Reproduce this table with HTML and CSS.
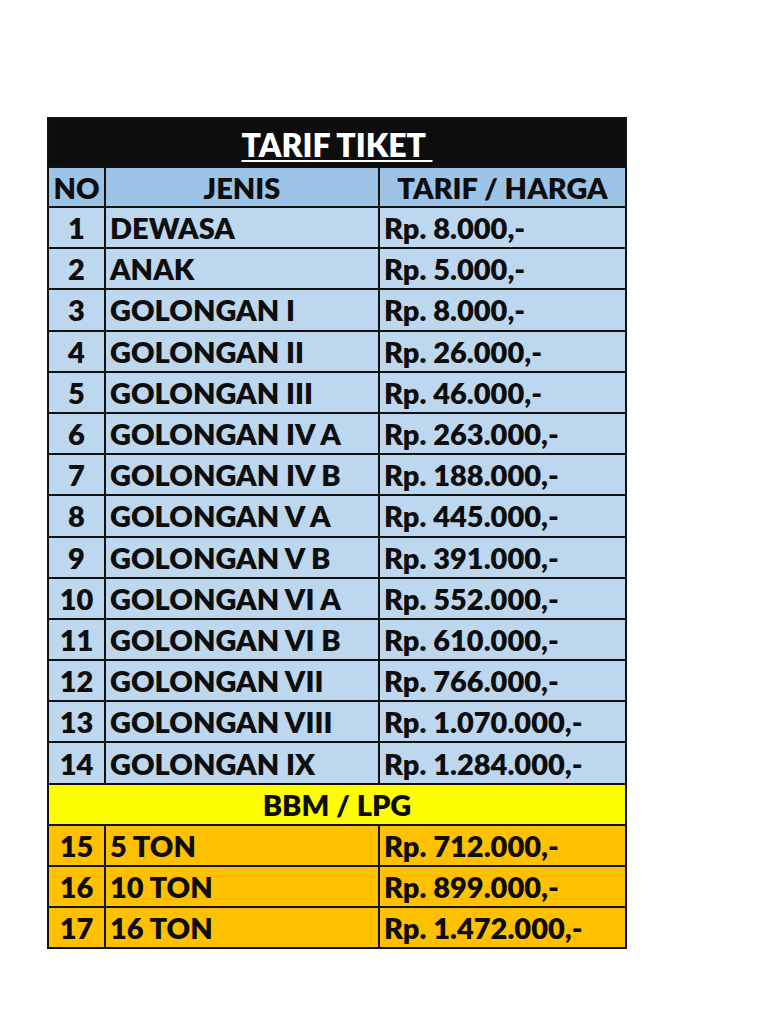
FILE: index.html
```html
<!DOCTYPE html>
<html lang="id">
<head>
<meta charset="utf-8">
<title>Tarif Tiket</title>
<link rel="stylesheet" href="styles.css">
</head>
<body>
<div class="page">
<table class="tarif">
  <colgroup><col class="c-no"><col class="c-jenis"><col class="c-tarif"></colgroup>
  <tr class="title"><td colspan="3"><span class="title-text">TARIF TIKET&nbsp;</span></td></tr>
  <tr class="head"><td class="no">NO</td><td class="center">JENIS</td><td class="center">TARIF / HARGA</td></tr>
  <tr class="blue"><td class="no">1</td><td>DEWASA</td><td>Rp. 8.000,-</td></tr>
  <tr class="blue"><td class="no">2</td><td>ANAK</td><td>Rp. 5.000,-</td></tr>
  <tr class="blue"><td class="no">3</td><td>GOLONGAN I</td><td>Rp. 8.000,-</td></tr>
  <tr class="blue"><td class="no">4</td><td>GOLONGAN II</td><td>Rp. 26.000,-</td></tr>
  <tr class="blue"><td class="no">5</td><td>GOLONGAN III</td><td>Rp. 46.000,-</td></tr>
  <tr class="blue"><td class="no">6</td><td>GOLONGAN IV A</td><td>Rp. 263.000,-</td></tr>
  <tr class="blue"><td class="no">7</td><td>GOLONGAN IV B</td><td>Rp. 188.000,-</td></tr>
  <tr class="blue"><td class="no">8</td><td>GOLONGAN V A</td><td>Rp. 445.000,-</td></tr>
  <tr class="blue"><td class="no">9</td><td>GOLONGAN V B</td><td>Rp. 391.000,-</td></tr>
  <tr class="blue"><td class="no">10</td><td>GOLONGAN VI A</td><td>Rp. 552.000,-</td></tr>
  <tr class="blue"><td class="no">11</td><td>GOLONGAN VI B</td><td>Rp. 610.000,-</td></tr>
  <tr class="blue"><td class="no">12</td><td>GOLONGAN VII</td><td>Rp. 766.000,-</td></tr>
  <tr class="blue"><td class="no">13</td><td>GOLONGAN VIII</td><td>Rp. 1.070.000,-</td></tr>
  <tr class="blue"><td class="no">14</td><td>GOLONGAN IX</td><td>Rp. 1.284.000,-</td></tr>
  <tr class="yellow"><td colspan="3" class="center">BBM / LPG</td></tr>
  <tr class="orange"><td class="no">15</td><td>5 TON</td><td>Rp. 712.000,-</td></tr>
  <tr class="orange"><td class="no">16</td><td>10 TON</td><td>Rp. 899.000,-</td></tr>
  <tr class="orange"><td class="no">17</td><td>16 TON</td><td>Rp. 1.472.000,-</td></tr>
</table>
</div>
</body>
</html>
```
FILE: styles.css
```css
html, body {
  margin: 0;
  padding: 0;
  background: #ffffff;
}
.page {
  padding: 117px 0 0 47px;
}
.tarif {
  border-collapse: collapse;
  table-layout: fixed;
  width: 578px;
  font-family: Lato, "Open Sans", sans-serif;
  font-weight: 800;
  font-size: 29px;
  color: #0d0d0d;
}
.c-no { width: 57px; }
.c-jenis { width: 274px; }
.c-tarif { width: 247px; }
.tarif td {
  border: 2px solid #111111;
  padding: 2px 0 1px 4px;
  height: 36.2px;
  line-height: 34px;
  white-space: nowrap;
  overflow: hidden;
  vertical-align: middle;
}
.tarif td.no {
  text-align: center;
  padding-left: 0;
}
.tarif td.center {
  text-align: center;
  padding-left: 0;
}
.title td {
  background: #0d0d0d;
  color: #ffffff;
  text-align: center;
  height: 43px;
  padding: 4px 0 0 0;
  font-size: 32px;
}
.title-text {
  text-decoration: underline;
  text-decoration-thickness: 2px;
  text-underline-offset: 3px;
}
.head td {
  background: #9dc3e6;
  height: 35px;
}
.blue td { background: #bdd7ee; }
.yellow td { background: #ffff00; }
.orange td { background: #ffc000; }
```
